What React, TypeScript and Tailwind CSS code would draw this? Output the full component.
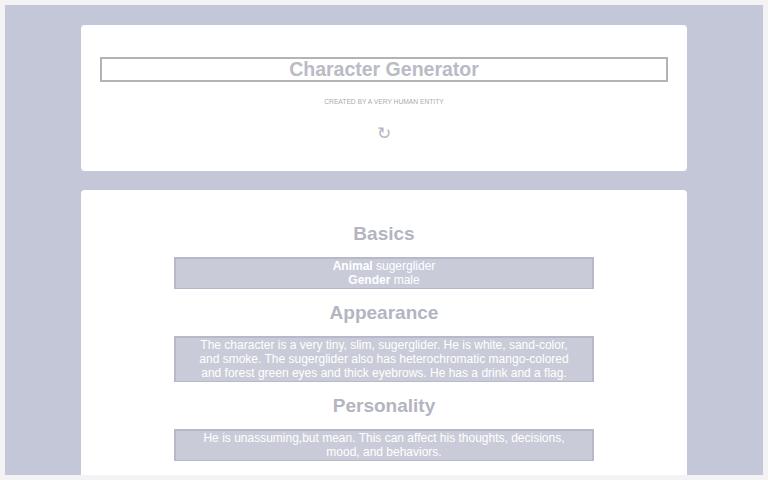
import React from "react";

const font = { fontFamily: '"Liberation Sans", Arial, sans-serif' };

function Section({ title, children }: { title: string; children: React.ReactNode }) {
  return (
    <div className="flex flex-col items-center">
      <h2 className="text-[19px] font-bold leading-[22px] text-[#b3b5c0]">{title}</h2>
      <div className="mt-[12px] w-[420px] border-x-2 border-t-2 border-b border-[#b6b9c7] bg-[#c9ccd8] px-[20px] pb-[1px] text-center text-[12px] leading-[14px] text-white">
        {children}
      </div>
    </div>
  );
}

export default function App() {
  return (
    <div className="h-[480px] w-[768px] overflow-hidden bg-[#f3f3f5] p-[5px]" style={font}>
      <div className="flex h-[470px] flex-col items-center gap-[19px] overflow-hidden bg-[#c3c7d7] pt-[20px]">
        <div className="flex h-[146px] w-[606px] shrink-0 flex-col items-center rounded-[4px] bg-white px-[19px] pt-[32px]">
          <div className="flex h-[25px] w-full items-center justify-center border-2 border-[#b3b3b6]">
            <h1 className="text-[19.5px] font-bold leading-[21px] text-[#b9bbc5]">Character Generator</h1>
          </div>
          <div className="mt-[16px] text-[6.7px] uppercase leading-[8px] text-[#a9abb3]">Created by a very human entity</div>
          <div className="mt-[18px] text-[17px] leading-[20px] text-[#b3b5bf]">↻</div>
        </div>
        <div className="flex w-[606px] shrink-0 flex-col gap-[13px] rounded-[4px] bg-white pt-[33px] pb-[20px]">
          <Section title="Basics">
            <div><span className="font-bold">Animal</span> sugerglider</div>
            <div><span className="font-bold">Gender</span> male</div>
          </Section>
          <Section title="Appearance">
            The character is a very tiny, slim, sugerglider. He is white, sand-color, and smoke. The sugerglider also has heterochromatic mango-colored and forest green eyes and thick eyebrows. He has a drink and a flag.
          </Section>
          <Section title="Personality">
            He is unassuming,but mean. This can affect his thoughts, decisions, mood, and behaviors.
          </Section>
        </div>
      </div>
    </div>
  );
}
